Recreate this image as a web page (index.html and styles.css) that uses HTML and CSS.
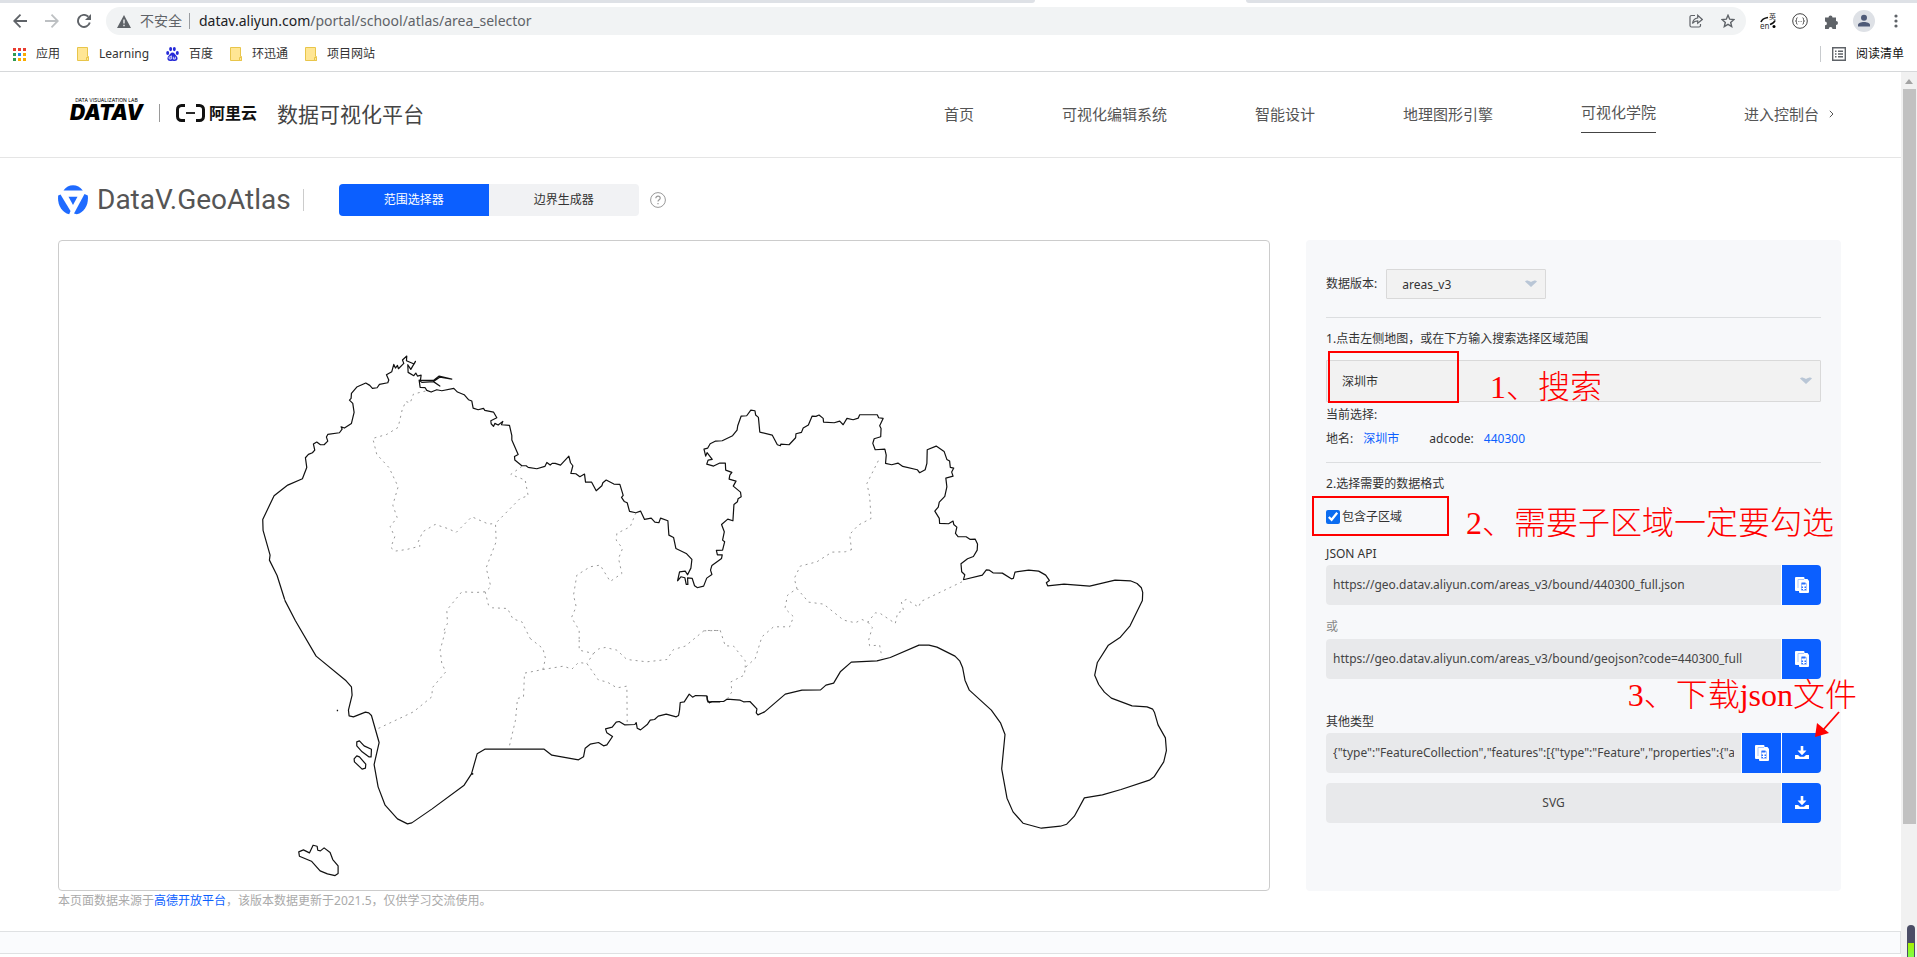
FILE: index.html
```html
<!DOCTYPE html>
<html lang="zh-CN">
<head>
  <meta charset="UTF-8">
  <title>DataV.GeoAtlas</title>
  <link rel="stylesheet" href="styles.css">
</head>
<body>
  <!-- shared icons -->
  <svg class="sprite" aria-hidden="true">
    <symbol id="i-copy" viewBox="0 0 14 16">
      <path d="M1 0h7.500a1 1 0 0 1 1 1v1H12.500L14 4v11a1 1 0 0 1-1 1H5a1 1 0 0 1-1-1v-1H1a1 1 0 0 1-1-1V1a1 1 0 0 1 1-1z" fill="#fff"/>
      <path d="M3 11V2.500h6" fill="none" stroke="#a9c6ff" stroke-width="1"/>
      <path d="M6.500 6.500h5v7h-5z" fill="none" stroke="#a9c6ff" stroke-width="1"/>
      <path d="M6.500 5.500h4v2h-4zM6.500 9.500h1.500v1.500H6.500zM9.500 9.500H11v1.500H9.500zM6.500 12h1.500v1H6.500zM9.500 12H11v1H9.500z" fill="#2a72ff"/>
    </symbol>
    <symbol id="i-download" viewBox="0 0 14 14">
      <path d="M5.700 0h2.600v4.500H11.500L7 9.300 2.500 4.500h3.200zM0 9h3l2 1.800h4L11 9h3v4H0z" fill="#fff"/>
    </symbol>
    <symbol id="i-chevron" viewBox="0 0 12 7">
      <path d="M0 1.500C1.500 0 3 .5 6 2c3-1.500 4.500-2 6-.5L6 7z" fill="#b9c6d6"/>
    </symbol>
    <symbol id="i-folder" viewBox="0 0 12 14">
      <path d="M.5.5h10v9h1v4H.5z" fill="#ffe694" stroke="#e8c54a"/>
      <path d="M9.500 13.500v-3h2v3z" fill="#ffe694" stroke="#e8c54a"/>
    </symbol>
  </svg>

  <div class="browser">
    <div class="tabstrip"><span class="tab-left"></span><span class="tab-right"></span></div>
    <div class="toolbar">
      <button class="tool" title="返回"><svg width="14" height="14" viewBox="0 0 14 14" fill="none" stroke="#5f6368" stroke-width="1.800"><path d="M14 7H1.500M7.500 .7L1.200 7l6.300 6.300"/></svg></button>
      <button class="tool" title="前进"><svg width="14" height="14" viewBox="0 0 14 14" fill="none" stroke="#bdc0c3" stroke-width="1.800"><path d="M0 7h12.500M6.500 .7L12.800 7l-6.300 6.300"/></svg></button>
      <button class="tool" title="刷新"><svg width="14" height="14" viewBox="0 0 14 14" fill="none" stroke="#5f6368" stroke-width="1.900"><path d="M12.800 8.500A6 6 0 1 1 11.300 2.700"/><path d="M14 0v6H8z" fill="#5f6368" stroke="none"/></svg></button>
      <div class="omnibox">
        <svg width="14" height="13" viewBox="0 0 14 13"><path d="M7 0l7 13H0z" fill="#5f6368"/><path d="M6.300 4.500h1.400v4H6.300zM6.300 9.800h1.400v1.400H6.300z" fill="#f1f3f4"/></svg>
        <span class="insecure">不安全</span>
        <span class="url"><b>datav.aliyun.com</b>/portal/school/atlas/area_selector</span>
        <button class="tool share" title="分享"><svg width="14" height="14" viewBox="0 0 14 14" fill="none" stroke="#5f6368" stroke-width="1.200"><path d="M6 1.500H2.500a1.500 1.500 0 0 0-1.500 1.500v8.500A1.500 1.500 0 0 0 2.500 13h7.500a1.500 1.500 0 0 0 1.500-1.500V10"/><path d="M3.500 9.500C4 6 5.500 4.300 8.700 4V1.300L13.300 5.500 8.700 9.200V6.800C6.500 6.800 5 7.500 3.500 9.500z"/></svg></button>
        <button class="tool" title="收藏"><svg width="14" height="14" viewBox="0 0 14 14" fill="none" stroke="#5f6368" stroke-width="1.400"><path d="M7 1.300l1.700 3.900 4.200.4-3.200 2.800 1 4.200L7 10.400l-3.700 2.200 1-4.200L1.100 5.600l4.200-.4z"/></svg></button>
      </div>
      <div class="extensions">
        <button class="tool" title="翻译"><svg width="16" height="16" viewBox="0 0 16 16"><text x="9" y="6" font-size="7" fill="#333">英</text><text x="0" y="16" font-size="8" fill="#333">en</text><path d="M1 9C2 6 4.500 5 8 4.500M15 7.500c-1 2.500-3 3.500-5 4" fill="none" stroke="#111" stroke-width="1.700"/><circle cx="14" cy="13.500" r="1.500"/></svg></button>
        <button class="tool" title="JSON"><svg width="16" height="16" viewBox="0 0 16 16" fill="none" stroke="#444"><circle cx="8" cy="8" r="7.300"/><path d="M5.500 4.800c-1.200 0-1 .8-1 1.700S4.500 8 3.500 8c1 0 1 .7 1 1.500s-.2 1.700 1 1.700M10.500 4.800c1.200 0 1 .8 1 1.700S11.500 8 12.500 8c-1 0-1 .7-1 1.500s.2 1.700-1 1.700M6.500 8.500h.8M8.700 8.500h.8"/></svg></button>
        <button class="tool" title="扩展程序"><svg width="15" height="15" viewBox="0 0 15 15" fill="#5f6368"><path d="M1 3.500h3.500a2 2 0 1 1 4 0H12V7a2 2 0 1 1 0 4v4H8.500a1.900 1.900 0 1 0-3.800 0H1v-3.700a1.900 1.900 0 1 0 0-3.800z"/></svg></button>
        <button class="tool" title="用户"><svg width="22" height="22" viewBox="0 0 22 22"><circle cx="11" cy="11" r="11" fill="#dee1e6"/><circle cx="11" cy="7.800" r="3" fill="#4f5b78"/><path d="M5 16.500v-1.500c0-2 3-3 6-3s6 1 6 3v1.500z" fill="#4f5b78"/></svg></button>
        <button class="tool" title="菜单"><svg width="4" height="14" viewBox="0 0 4 14" fill="#5f6368"><circle cx="2" cy="2" r="1.600"/><circle cx="2" cy="7" r="1.600"/><circle cx="2" cy="12" r="1.600"/></svg></button>
      </div>
    </div>
    <div class="bookmarks">
      <a href="#"><svg width="13" height="13" viewBox="0 0 13 13"><path d="M0 0h3v3H0zM5 0h3v3H5zM10 0h3v3h-3z" fill="#ea3b2e"/><path d="M0 5h3v3H0zM0 10h3v3H0z" fill="#2e9b53"/><path d="M5 5h3v3H5z" fill="#1a86f0"/><path d="M10 5h3v3h-3zM5 10h3v3H5zM10 10h3v3h-3z" fill="#f9ab00"/></svg>应用</a>
      <a href="#"><svg width="12" height="14"><use href="#i-folder"/></svg>Learning</a>
      <a href="#"><svg width="13" height="14" viewBox="0 0 13 14" fill="#2529d8"><ellipse cx="1.700" cy="6" rx="1.500" ry="2"/><ellipse cx="4.600" cy="2.100" rx="1.500" ry="2.100"/><ellipse cx="8.300" cy="2.100" rx="1.500" ry="2.100"/><ellipse cx="11.300" cy="6" rx="1.500" ry="2"/><path d="M6.500 5.500c2 0 2.500 2 4 3.500 2 2 1 5-1.500 5-1 0-1.500-.3-2.500-.3s-1.500.3-2.500.3c-2.500 0-3.500-3-1.500-5 1.500-1.500 2-3.500 4-3.500z"/><path d="M5.300 8.500v3.500H4a1 1 0 0 1 0-2.200h1.300M7.300 9.700V12h2V9.700" fill="none" stroke="#fff" stroke-width=".8"/></svg>百度</a>
      <a href="#"><svg width="12" height="14"><use href="#i-folder"/></svg>环迅通</a>
      <a href="#"><svg width="12" height="14"><use href="#i-folder"/></svg>项目网站</a>
      <a class="reading" href="#"><svg width="14" height="14" viewBox="0 0 14 14" fill="none" stroke="#5f6368" stroke-width="1.400"><path d="M.7.7h12.600v12.600H.7zM3 4.200h1.500M6 4.200h5M3 7h1.500M6 7h5M3 9.800h1.500M6 9.800h5"/></svg>阅读清单</a>
    </div>
  </div>

  <div class="viewport">
    <div class="page">
      <header class="site-header">
        <a class="datav" href="#"><small>DATA VISUALIZATION LAB</small>DATAV</a>
        <a class="aliyun" href="#"><svg width="29" height="18" viewBox="0 0 29 18" fill="none" stroke="#111" stroke-width="3"><path d="M9 1.500H5.500a4 4 0 0 0-4 4v7a4 4 0 0 0 4 4H9M20 1.500h3.500a4 4 0 0 1 4 4v7a4 4 0 0 1-4 4H20"/><path d="M10 9h9" stroke-width="1.800"/></svg>阿里云</a>
        <span class="platform">数据可视化平台</span>
        <nav>
          <a href="#">首页</a>
          <a href="#">可视化编辑系统</a>
          <a href="#">智能设计</a>
          <a href="#">地理图形引擎</a>
          <a href="#" class="active">可视化学院</a>
          <a href="#">进入控制台<svg width="5" height="8" viewBox="0 0 5 8" fill="none" stroke="#555"><path d="M.8.8L4 4 .8 7.200"/></svg></a>
        </nav>
      </header>

      <div class="title-row">
        <svg width="30" height="30" viewBox="0 0 30 30" fill="#1f6bff">
          <path d="M5.500 5.500C10-1.500 20-1.500 24.800 5.500z"/>
          <path d="M.2 10.500C-.8 19 3 27 11.200 29.300L12.500 26 2.500 9.500z"/>
          <path d="M29.800 10.500C30.800 19 27 27 18.800 29.300L16 28.500 26.500 9z"/>
          <path d="M10.500 11.800h9L15 20z"/>
        </svg>
        <h1>DataV.GeoAtlas</h1>
        <div class="tabs">
          <button class="on">范围选择器</button>
          <button>边界生成器</button>
        </div>
        <svg class="help" width="16" height="16" viewBox="0 0 16 16" fill="none" stroke="#999"><circle cx="8" cy="8" r="7.400"/><path d="M5.800 6.300c0-1.400 1-2.100 2.200-2.100s2.200.8 2.200 2c0 1.500-2.200 1.600-2.200 3.300M8 11v1.200" stroke-width="1.200"/></svg>
      </div>

      <main>
        <div class="map">
          <svg viewBox="59 241 1210 649">
            <!-- city outline -->
            <g class="border">
              <g transform="translate(240 340) scale(.33333)">
                <path d="M134 779L111 706 88 660 90 645 69 571 68 538 102 467 143 435 187 416 200 382 196 353 205 343 217 338 224 330 220 312 230 306 241 314 252 314 263 303 259 291 263 283 298 278 306 267 303 260 313 264 334 250 342 217 338 190 328 180 333 175 334 160 350 141 377 129 389 136 397 145 411 143 418 133 443 128 446 120 439 104 455 95 461 73 466 84 472 76 475 86 491 70 487 60 500 48 499 62 522 72 526 64 512 88 503 74 504 97 521 107 527 99 532 108 543 105 541 120 580 121 597 108 635 117 600 111 580 124 599 138 580 125 545 127 537 120 540 142 555 143 560 151 573 156 590 149 605 152 641 145 652 156 672 164 685 179 695 183 699 204 714 209 730 205 734 211 760 216 770 233 752 242 753 251 760 259 764 250 774 255 788 244 784 254 808 256 815 287 815 300 834 343 823 349 824 360 845 377 858 377 864 382 890 386 914 379 920 367 930 375 936 370 945 370 961 375 986 348 991 368 998 377 992 400 1007 401 1019 410 1033 402 1036 426 1054 426 1068 452 1085 437 1088 428 1098 420 1121 432 1139 433 1149 466 1144 472 1152 484 1161 488 1168 514 1187 518 1201 513 1213 538 1233 534 1244 546 1256 548 1261 534 1283 542 1286 585 1300 592 1307 625 1338 640 1355 658 1352 684 1342 704 1335 693 1318 695 1312 722 1322 710 1334 713 1338 733 1343 733 1342 713 1356 715 1363 737 1372 743"/>
              </g>
              <g transform="translate(660 380) scale(.3444 .33333)">
                <path d="M107 623L126 618 135 594 150 583 146 570 150 556 178 535 180 524 166 524 163 511 181 510 187 485 181 480 186 455 178 433 196 417 211 422 214 373 224 365 226 356 235 350 233 336 212 318 220 303 200 297 202 285 208 277 190 270 189 249 173 249 155 258 135 252 139 240 151 238 136 218 132 228 127 207 138 204 145 191 161 183 180 182 210 167 223 150 225 137 235 108 251 107 263 90 275 92 277 105 285 112 289 156 325 165 340 194 349 197 350 192 374 194 393 173 394 161 410 157 415 144 430 135 441 108 452 109 461 105 473 115 474 126 505 128 521 123 531 134 542 115 560 119 575 114 579 104 630 104 634 113 647 115 637 137 641 145 640 170 621 176 617 190 624 209 652 207 656 225 654 250 672 254 690 249 704 259 746 269 753 278 769 269 774 250 775 209 801 198 824 214 832 238 840 243 842 262 852 264 846 276 850 288 829 294 832 320 826 349 810 366 807 381 797 393 810 415 811 430 837 431 850 423 852 433 861 441 857 460 865 470 888 470 900 478 914 477 921 492 920 510 909 529 892 536 873 551 875 575 884 584 880 599"/>
              </g>
              <g transform="translate(700 540) scale(.33333)">
                <path d="M789 119L846 105 858 89 866 90 878 98 906 99 933 116 939 115 944 96 985 90 1015 93 1036 105 1047 121 1038 128 1042 137 1091 132 1168 138 1244 120 1290 122 1310 130 1323 143 1327 157 1326 181 1289 257 1260 291 1224 315 1191 367 1183 405 1195 433 1212 456 1233 474 1295 497 1340 500 1357 507 1362 516 1373 554 1395 593 1398 631 1390 665 1361 710 1347 720 1262 748 1206 764 1152 773 1122 828 1099 852 1080 858 1023 864 968 849 938 815 920 774 904 686 914 583 901 549 873 510 807 450 794 420 787 383 778 362 764 348 710 321 686 315 656 315 570 352 530 362 453 366 420 395 400 429 377 435 361 449 305 450 255 462 193 515 173 524 168 518 170 506 149 484 130 485 120 480 80 477 70 484 35 484 28 488 21 480 20 467"/>
              </g>
              <g transform="translate(240 600) scale(.33333)">
                <path d="M1400 287L1366 286 1357 291 1347 282 1332 305 1320 307 1318 330 1315 346 1308 350 1278 342 1254 348 1243 358 1230 360 1222 372 1201 389 1191 384 1188 367 1184 373 1153 374 1137 364 1128 366 1116 381 1096 386 1100 398 1117 409 1100 434 1090 437 1075 427 1050 432 1035 444 1030 470 1015 479 935 465 912 447 734 447 711 461 694 521 672 555 576 626 515 668 502 671 472 656 435 615 414 560 402 493 417 427 394 346 386 338 376 336 340 350 327 347 325 330 336 285 334 260 318 242 228 168 166 62 134 0"/>
                <path d="M1400 287L1403 305 1440 305"/>
                <!-- islands -->
                <path d="M350 425L358 422 372 437 394 447 393 470 386 470 366 455 350 437zM342 476L350 467 358 470 377 492 376 504 366 507 343 485zM290 331h4M292 329v4M694 519l4 2-4 2M176 755L190 749 208 758 219 735 231 738 233 750 241 752 252 743 270 757 278 778 294 797 294 820 285 826 262 821 240 812 214 783 178 768z"/>
              </g>
            </g>
            <!-- district borders -->
            <g class="district">
              <g transform="translate(240 340) scale(.33333)">
                <path d="M556 153L520 162 510 189 497 184 486 210 474 262 440 283 398 295 410 343 447 383 474 440 458 495 471 532 450 560 464 590 452 622 465 633 500 628 540 618 533 608 548 575 585 553 625 566 648 577 695 530 745 552 766 550"/>
                <path d="M845 379L812 403 855 420 864 467 840 475 766 550 768 605 738 683 752 740 735 755 708 757 665 755 620 810 622 850 612 870 615 875"/>
                <path d="M735 755L745 795 757 803 802 805 818 836 845 845 870 895"/>
                <path d="M1187 518L1170 560 1130 580 1128 600 1147 625 1135 655 1145 700 1110 724 1080 675 1050 680 1010 705 1000 765 1008 800 994 832 1017 870 1017 900"/>
              </g>
              <g transform="translate(660 380) scale(.3444 .33333)">
                <path d="M633 242L600 310 608 350 612 415 575 435 550 463 555 508"/>
              </g>
              <g transform="translate(240 600) scale(.33333)">
                <path d="M615 95L600 150 605 190 617 215 577 262 575 290 520 335 408 388"/>
                <path d="M870 115L908 145 916 175 908 208 853 219 850 290 832 295 826 360 806 445"/>
                <path d="M908 208L970 198 995 207 1015 187 1040 190 1075 240 1100 245 1130 263 1160 258 1161 372"/>
                <path d="M1017 120L1017 150 1060 160 1040 190M1060 160L1076 146 1095 142 1130 150 1160 178 1220 185 1280 178 1300 148 1335 138 1392 91 1440 91"/>
              </g>
              <g transform="translate(700 540) scale(.33333)">
                <path d="M60 271L75 317 100 318 135 362 135 382"/>
                <path d="M455 28L435 35 395 36 350 65 300 78 282 115 290 145 262 165 254 205 280 230 268 260 220 260 185 290 165 355 135 382 132 405 92 425 95 455 82 475"/>
                <path d="M290 145L325 186 370 192 430 240 465 248 485 238 503 246 525 218 540 220 585 250 592 218 610 212 603 185 618 178 655 201 662 184 785 125"/>
                <path d="M503 246L516 262 505 300 508 317 538 315 545 352M12 272L60 271"/>
              </g>
            </g>
          </svg>
        </div>

        <form class="panel">
          <div class="version">
            <label for="version">数据版本:</label>
            <span class="select small">
              <select id="version"><option>areas_v3</option></select>
              <svg width="12" height="7"><use href="#i-chevron"/></svg>
            </span>
          </div>

          <section>
            <label class="line" for="area">1.点击左侧地图，或在下方输入搜索选择区域范围</label>
            <span class="select large">
              <select id="area"><option>深圳市</option></select>
              <svg width="12" height="7"><use href="#i-chevron"/></svg>
            </span>
            <p class="current">当前选择:</p>
            <p class="place">地名:<em>深圳市</em><span>adcode:</span><em>440300</em></p>
          </section>

          <section>
            <p>2.选择需要的数据格式</p>
            <label class="check"><input type="checkbox" checked>包含子区域</label>
            <label class="line api" for="api">JSON API</label>
            <div class="field">
              <input id="api" type="text" readonly value="https://geo.datav.aliyun.com/areas_v3/bound/440300_full.json">
              <button type="button" title="复制"><svg width="14" height="16"><use href="#i-copy"/></svg></button>
            </div>
            <label class="line or" for="geojson">或</label>
            <div class="field">
              <input id="geojson" type="text" readonly value="https://geo.datav.aliyun.com/areas_v3/bound/geojson?code=440300_full">
              <button type="button" title="复制"><svg width="14" height="16"><use href="#i-copy"/></svg></button>
            </div>
            <label class="line other" for="other">其他类型</label>
            <div class="field">
              <input id="other" type="text" readonly value='{"type":"FeatureCollection","features":[{"type":"Feature","properties":{"adcode":440303,"name":"罗湖区"}}]}'>
              <button type="button" title="复制"><svg width="14" height="16"><use href="#i-copy"/></svg></button>
              <button type="button" title="下载"><svg width="14" height="14"><use href="#i-download"/></svg></button>
            </div>
            <div class="field svg-field">
              <span>SVG</span>
              <button type="button" title="下载"><svg width="14" height="14"><use href="#i-download"/></svg></button>
            </div>
          </section>

          <!-- tutorial marks over the form -->
          <i class="mark mark-search"></i>
          <i class="mark mark-check"></i>
          <span class="note note-search">1、搜索</span>
          <span class="note note-check">2、需要子区域一定要勾选</span>
          <span class="note note-download">3、下载json文件</span>
          <svg class="arrow" width="26" height="28" viewBox="0 0 26 28"><path d="M25 2L9 20" stroke="#f00" stroke-width="1.800"/><path d="M1 27L3 13l12 10z" fill="#f00"/></svg>
        </form>
      </main>
      <p class="source">本页面数据来源于<a href="#">高德开放平台</a>，该版本数据更新于2021.5，仅供学习交流使用。</p>
      <footer></footer>
    </div>

    <div class="scrollbar">
      <svg width="8" height="5" viewBox="0 0 8 5"><path d="M4 0l4 5H0z" fill="#a3a3a3"/></svg>
      <div class="thumb"></div>
      <div class="gauge"></div>
    </div>
  </div>
</body>
</html>
```

FILE: styles.css
```css
:root {
  --blue: #0b5fff;
  --text: #333;
  --line: #dcdee0;
  --icon: #5f6368;
}

* {
  box-sizing: border-box;
}

body {
  margin: 0;
  min-height: 100vh;
  display: flex;
  flex-direction: column;
  overflow: hidden;
  background: #fff;
  color: var(--text);
  font-family: "Noto Sans", "Noto Sans CJK SC", sans-serif;
  font-size: 12px;
  line-height: 20px;
}

button, input, select {
  font: inherit;
  color: inherit;
}

button {
  border: none;
  padding: 0;
  cursor: pointer;
}

a {
  color: inherit;
  text-decoration: none;
}

p {
  margin: 0;
}

svg {
  display: block;
  flex: none;
}

.sprite {
  position: absolute;
  width: 0;
  height: 0;
}

/* browser bars */
.browser {
  border-bottom: 1px solid #d6d8da;
}

.tabstrip {
  height: 3px;
  display: flex;
  justify-content: space-between;
}

.tabstrip span {
  background: #dee1e6;
}

.tab-left {
  width: 54%;
  border-bottom-right-radius: 4px;
}

.tab-right {
  width: 35%;
  border-bottom-left-radius: 4px;
}

.toolbar {
  display: flex;
  align-items: center;
  gap: 18px;
  height: 36px;
  padding: 0 19px 0 13px;
}

.tool {
  background: none;
}

.omnibox {
  flex: 1;
  display: flex;
  align-items: center;
  height: 28px;
  margin-left: -3px;
  padding: 0 11px;
  border-radius: 14px;
  background: #f1f3f4;
  color: var(--icon);
  font-size: 14px;
}

.insecure {
  margin-left: 9px;
  padding-right: 7px;
  border-right: 1px solid #9a9da1;
  line-height: 16px;
}

.url {
  margin-left: 9px;
  font-family: "Noto Sans", sans-serif;
}

.url b {
  font-weight: 400;
  color: #202124;
}

.share {
  margin: 0 18px 0 auto;
}

.extensions {
  display: flex;
  align-items: center;
  gap: 16px;
  margin-left: -4px;
}

.extensions .tool:nth-child(4) {
  margin: 0 3px 0 -2px;
}

.bookmarks {
  display: flex;
  align-items: center;
  gap: 17px;
  height: 32px;
  padding: 0 13px 2px;
}

.bookmarks a {
  display: flex;
  align-items: center;
  gap: 10px;
}

.bookmarks .reading {
  margin-left: auto;
  padding-left: 11px;
  border-left: 1px solid #c8cbce;
  line-height: 16px;
  color: #111;
}

/* page */
.viewport {
  flex: 1;
  display: flex;
}

.page {
  flex: 1;
  min-width: 0;
}

.site-header {
  display: flex;
  align-items: center;
  height: 86px;
  padding: 0 67px 2px 70px;
  border-bottom: 1px solid #e5e5e5;
}

.datav {
  display: flex;
  flex-direction: column;
  align-items: center;
  margin-bottom: 8px;
  font-family: Inter, sans-serif;
  font-size: 21px;
  font-weight: 900;
  font-style: italic;
  line-height: 20px;
  color: #000;
}

.datav small {
  font-size: 5px;
  font-weight: 400;
  font-style: normal;
  line-height: 6px;
}

.aliyun {
  display: flex;
  align-items: center;
  gap: 4px;
  margin: 0 20px 2px 16px;
  padding-left: 16px;
  border-left: 1px solid #999;
  font-size: 16px;
  font-weight: 700;
  line-height: 18px;
  color: #111;
}

.platform {
  font-size: 21px;
  line-height: 28px;
  color: #444;
}

nav {
  display: flex;
  gap: 88px;
  margin-left: auto;
}

nav a {
  display: flex;
  align-items: center;
  gap: 10px;
  height: 38px;
  font-size: 15px;
  color: #555;
  white-space: nowrap;
}

nav .active {
  padding-bottom: 2px;
  border-bottom: 1px solid #444;
}

.title-row {
  display: flex;
  align-items: center;
  height: 82px;
  padding: 2px 60px 0 58px;
}

h1 {
  margin: 0 35px 0 9px;
  padding-right: 12px;
  font-family: Roboto, sans-serif;
  font-size: 28px;
  font-weight: 400;
  line-height: 22px;
  border-right: 1px solid #ccc;
  color: #555;
}

.tabs {
  display: flex;
  margin-right: 11px;
  border-radius: 4px;
  overflow: hidden;
}

.tabs button {
  width: 150px;
  height: 32px;
  background: #f1f2f4;
}

.tabs .on {
  background: var(--blue);
  color: #fff;
}

main {
  display: grid;
  grid-template-columns: 68% 30%;
  justify-content: space-between;
  margin: 0 60px 0 58px;
}

.map {
  border: 1px solid #ccc;
  border-radius: 4px;
}

.map > svg {
  width: 100%;
}

.map path {
  fill: none;
  vector-effect: non-scaling-stroke;
}

.border {
  stroke: #111;
  stroke-width: 1.2;
  stroke-linejoin: round;
}

.district {
  stroke: #999;
  stroke-width: 1;
  stroke-dasharray: 2 4;
}

/* form */
.panel {
  position: relative;
  padding: 29px 20px 0;
  border-radius: 4px;
  background: #f7f8fa;
}

.version {
  display: flex;
  align-items: center;
  gap: 9px;
  margin-bottom: 18px;
}

.select {
  position: relative;
  display: block;
}

.select select {
  width: 100%;
  height: 100%;
  padding: 1px 15px 0;
  appearance: none;
  border: 1px solid #d9d9d9;
  border-radius: 1px;
  background: #f2f2f2;
}

.select svg {
  position: absolute;
  right: 9px;
  top: 50%;
  margin-top: -4px;
}

.small {
  width: 160px;
  height: 30px;
}

.large {
  height: 42px;
  margin: 11px 0 3px;
}

.panel section {
  padding-top: 11px;
  border-top: 1px solid var(--line);
}

.line {
  display: block;
}

.place {
  margin: 4px 0 13px;
}

.place em {
  margin-left: 10px;
  font-style: normal;
  color: var(--blue);
}

.place span {
  margin-left: 30px;
}

.check {
  display: flex;
  align-items: center;
  gap: 2px;
  margin-top: 13px;
}

.check input {
  width: 14px;
  height: 14px;
  margin: 0;
  accent-color: #0b6cf0;
}

.api {
  margin: 17px 0 1px;
}

.or {
  margin: 12px 0 2px;
  color: #888;
}

.other {
  margin: 33px 0 1px;
}

.field {
  display: flex;
  gap: 1px;
  height: 40px;
  border-radius: 4px;
  overflow: hidden;
  background: #fff;
}

.field input, .field span {
  flex: 1;
  min-width: 0;
  padding: 0 7px;
  border: none;
  background: #e8e9eb;
  color: #444;
}

.field span {
  line-height: 40px;
  text-align: center;
}

.field button {
  display: flex;
  align-items: center;
  justify-content: center;
  width: 39px;
  background: var(--blue);
}

.svg-field {
  margin-top: 10px;
}

.mark {
  position: absolute;
  border: 2px solid #f00;
}

.mark-search {
  left: 22px;
  top: 111px;
  width: 131px;
  height: 52px;
}

.mark-check {
  left: 6px;
  top: 256px;
  width: 137px;
  height: 40px;
}

.note {
  position: absolute;
  font-family: "Liberation Serif", "Noto Sans CJK SC", serif;
  font-size: 32px;
  font-weight: 300;
  line-height: 40px;
  white-space: nowrap;
  color: #f00;
}

.note-search {
  left: 184px;
  top: 127px;
}

.note-check {
  left: 160px;
  top: 263px;
}

.note-download {
  right: -16px;
  top: 435px;
}

.arrow {
  position: absolute;
  right: 1px;
  top: 470px;
}

.source {
  margin-left: 58px;
  color: #aaa;
}

.source a {
  color: var(--blue);
}

footer {
  height: 23px;
  margin-top: 20px;
  border: 1px solid #dfe1e3;
  border-left: none;
  background: #fafbfd;
}

/* scrollbar */
.scrollbar {
  position: relative;
  display: flex;
  flex-direction: column;
  align-items: center;
  width: 16px;
  background: #f1f1f1;
}

.scrollbar svg {
  margin: 7px 0 5px;
}

.thumb {
  width: 13px;
  height: 83%;
  background: #c1c1c1;
}

.gauge {
  position: absolute;
  right: 2px;
  bottom: 0;
  width: 8px;
  height: 32px;
  border-radius: 4px 4px 0 0;
  border: 1px solid #4b4d66;
  border-bottom: none;
  background: linear-gradient(#4b4d66 17px, #a8f000 17px, #7dff4a);
}
```
